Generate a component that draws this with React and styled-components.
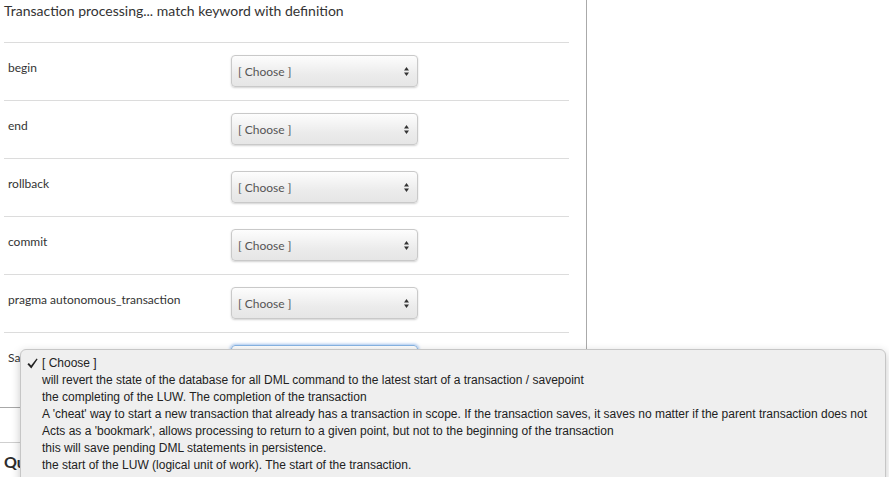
import React from "react";
import styled, { createGlobalStyle } from "styled-components";

const GlobalStyle = createGlobalStyle`
  html, body {
    margin: 0;
    padding: 0;
    background: #fff;
    overflow: hidden;
  }
  body {
    font-family: Lato, "Open Sans", sans-serif;
    color: #333;
  }
  * { box-sizing: border-box; }
`;

const Page = styled.div`
  position: relative;
  display: flex;
  height: 477px;
`;

const Main = styled.div`
  width: 587px;
  border-right: 1px solid #aaa;
`;

const Question = styled.div`
  border-bottom: 1px solid #a8a8a8;
  padding-bottom: 17px;
`;

const Title = styled.div`
  height: 42px;
  padding: 2px 4px 0;
  font-size: 14px;
  line-height: 17px;
  color: #333;
`;

const Answers = styled.div`
  margin: 0 17px 0 4px;
`;

const Row = styled.div`
  display: grid;
  grid-template-columns: 223px 187px;
  height: 58px;
  padding: 12px 0 0 4px;
  border-top: 1px solid #dcdcdc;
`;

const Label = styled.div`
  padding-top: 5px;
  font-size: 12px;
  line-height: 15px;
  color: #333;
`;

const Select = styled.div`
  display: flex;
  align-items: center;
  justify-content: space-between;
  height: 32px;
  padding: 0 8px 0 6px;
  border: 1px solid ${(p) => (p.$focused ? "#86b3e3" : "#c9c9c9")};
  border-radius: 4px;
  background: linear-gradient(#fdfdfd, #ececec 60%, #e6e6e6);
  box-shadow: ${(p) =>
    p.$focused
      ? "0 0 3px 1px rgba(110, 160, 230, 0.6)"
      : "0 1px 2px rgba(0, 0, 0, 0.18)"};
  font-size: 12px;
  color: #555;
`;

const NextQuestion = styled.div`
  margin-top: 34px;
  border-top: 1px solid #cfcfcf;
  padding: 9px 4px 0;
  font-size: 16px;
  font-weight: 700;
  line-height: 20px;
  color: #2d2d2d;
`;

const Menu = styled.div`
  position: absolute;
  left: 20px;
  top: 349px;
  width: 866px;
  height: 150px;
  padding-top: 5px;
  background: #efefef;
  border: 1px solid #c6c6c6;
  border-radius: 6px;
  box-shadow: 0 3px 10px rgba(0, 0, 0, 0.22);
  font-family: "Liberation Sans", Arial, sans-serif;
  font-size: 12px;
  line-height: 17px;
  color: #222;
`;

const MenuItem = styled.div`
  position: relative;
  padding-left: 21px;
  white-space: nowrap;
`;

const CheckMark = styled.svg`
  position: absolute;
  left: 6px;
  top: 3px;
`;

const Arrows = () => (
  <svg width="5" height="9" viewBox="0 0 5 9">
    <polygon points="2.5,0 5,3.6 0,3.6" fill="#333" />
    <polygon points="0,5.4 5,5.4 2.5,9" fill="#333" />
  </svg>
);

const keywords = [
  "begin",
  "end",
  "rollback",
  "commit",
  "pragma autonomous_transaction",
  "Savepoint",
];

const options = [
  "will revert the state of the database for all DML command to the latest start of a transaction / savepoint",
  "the completing of the LUW. The completion of the transaction",
  "A 'cheat' way to start a new transaction that already has a transaction in scope. If the transaction saves, it saves no matter if the parent transaction does not",
  "Acts as a 'bookmark', allows processing to return to a given point, but not to the beginning of the transaction",
  "this will save pending DML statements in persistence.",
  "the start of the LUW (logical unit of work). The start of the transaction.",
];

export default function App() {
  return (
    <>
      <GlobalStyle />
      <Page>
        <Main>
          <Question>
            <Title>Transaction processing... match keyword with definition</Title>
            <Answers>
              {keywords.map((k, i) => (
                <Row key={k}>
                  <Label>{k}</Label>
                  <Select $focused={i === keywords.length - 1}>
                    <span>[ Choose ]</span>
                    <Arrows />
                  </Select>
                </Row>
              ))}
            </Answers>
          </Question>
          <NextQuestion>Question 3</NextQuestion>
        </Main>
        <Menu>
          <MenuItem>
            <CheckMark width="11" height="11" viewBox="0 0 11 11">
              <path d="M0.4 6.2 L1.9 5 L4.1 7.4 L9.6 0.4 L10.6 1.2 L4.3 10.4 Z" fill="#222" />
            </CheckMark>
            [ Choose ]
          </MenuItem>
          {options.map((o) => (
            <MenuItem key={o}>{o}</MenuItem>
          ))}
        </Menu>
      </Page>
    </>
  );
}
